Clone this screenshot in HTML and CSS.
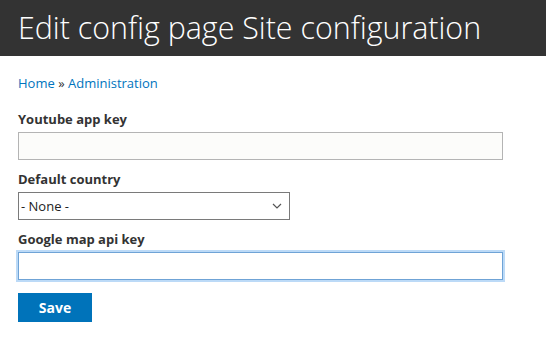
FILE: index.html
```html
<!DOCTYPE html>
<html lang="en">
<head>
<meta charset="utf-8">
<title>Edit config page Site configuration</title>
<link rel="stylesheet" href="styles.css">
</head>
<body>
<header class="page-header">
  <h1 class="page-title">Edit config page Site configuration</h1>
</header>
<main class="content">
  <nav class="breadcrumb"><a href="#">Home</a> » <a href="#">Administration</a></nav>
  <form class="config-form">
    <div class="form-item">
      <label class="form-label" for="yt">Youtube app key</label>
      <input class="form-text form-text--wide" id="yt" type="text">
    </div>
    <div class="form-item">
      <label class="form-label" for="country">Default country</label>
      <div class="select-wrap">
        <select class="form-select" id="country">
          <option>- None -</option>
        </select>
        <svg class="select-arrow" width="10" height="6" viewBox="0 0 10 6" aria-hidden="true">
          <path d="M1 1 L5 5 L9 1" fill="none" stroke="#555" stroke-width="1.2"/>
        </svg>
      </div>
    </div>
    <div class="form-item">
      <label class="form-label" for="gmap">Google map api key</label>
      <input class="form-text form-text--wide form-text--focus" id="gmap" type="text">
    </div>
    <div class="form-actions">
      <button class="button-primary" type="button">Save</button>
    </div>
  </form>
</main>
</body>
</html>
```
FILE: styles.css
```css
* { box-sizing: border-box; }
html, body { margin: 0; padding: 0; background: #fff; }
body {
  font-family: "Open Sans", "Noto Sans", sans-serif;
  color: #333;
  font-size: 14px;
}
.page-header {
  background: #333333;
  height: 56px;
  padding: 0 18px;
  display: flex;
  align-items: center;
}
.page-title {
  margin: 0;
  color: #fff;
  font-weight: 300;
  font-size: 30.4px;
  line-height: 40px;
  letter-spacing: 0;
  white-space: nowrap;
}
.content {
  padding: 17px 18px 0;
}
.breadcrumb {
  font-size: 13px;
  line-height: 20px;
  color: #333;
  margin-bottom: 17px;
}
.breadcrumb a {
  color: #0074bd;
  text-decoration: none;
}
.config-form {
  display: flex;
  flex-direction: column;
}
.form-item {
  display: flex;
  flex-direction: column;
  align-items: flex-start;
  margin-bottom: 10px;
}
.form-label {
  font-weight: 700;
  font-size: 13px;
  line-height: 18px;
  color: #333;
  margin-bottom: 4px;
}
.form-text {
  height: 28px;
  border: 1px solid #b4b4b4;
  background: #fcfcfa;
  font-family: inherit;
  font-size: 13px;
  padding: 0 6px;
  border-radius: 0;
  outline: none;
}
.form-text--wide { width: 485px; }
.form-text--focus {
  background: #fff;
  border-color: #6fa3d6;
  box-shadow: 0 0 0 2px #bcdaf7;
}
.select-wrap {
  position: relative;
  width: 272px;
}
.form-select {
  appearance: none;
  -webkit-appearance: none;
  width: 272px;
  height: 28px;
  border: 1px solid #7a7a7a;
  border-radius: 0;
  background: #fff;
  font-family: inherit;
  font-size: 13px;
  color: #222;
  padding: 0 24px 0 2px;
  outline: none;
}
.select-arrow {
  position: absolute;
  right: 8px;
  top: 11px;
  pointer-events: none;
}
.form-actions {
  margin-top: 3px;
}
.button-primary {
  background: #0073ba;
  color: #fff;
  border: 0;
  border-radius: 0;
  width: 74px;
  height: 29px;
  font-family: inherit;
  font-weight: 700;
  font-size: 14px;
  padding: 0;
  cursor: pointer;
}
```
